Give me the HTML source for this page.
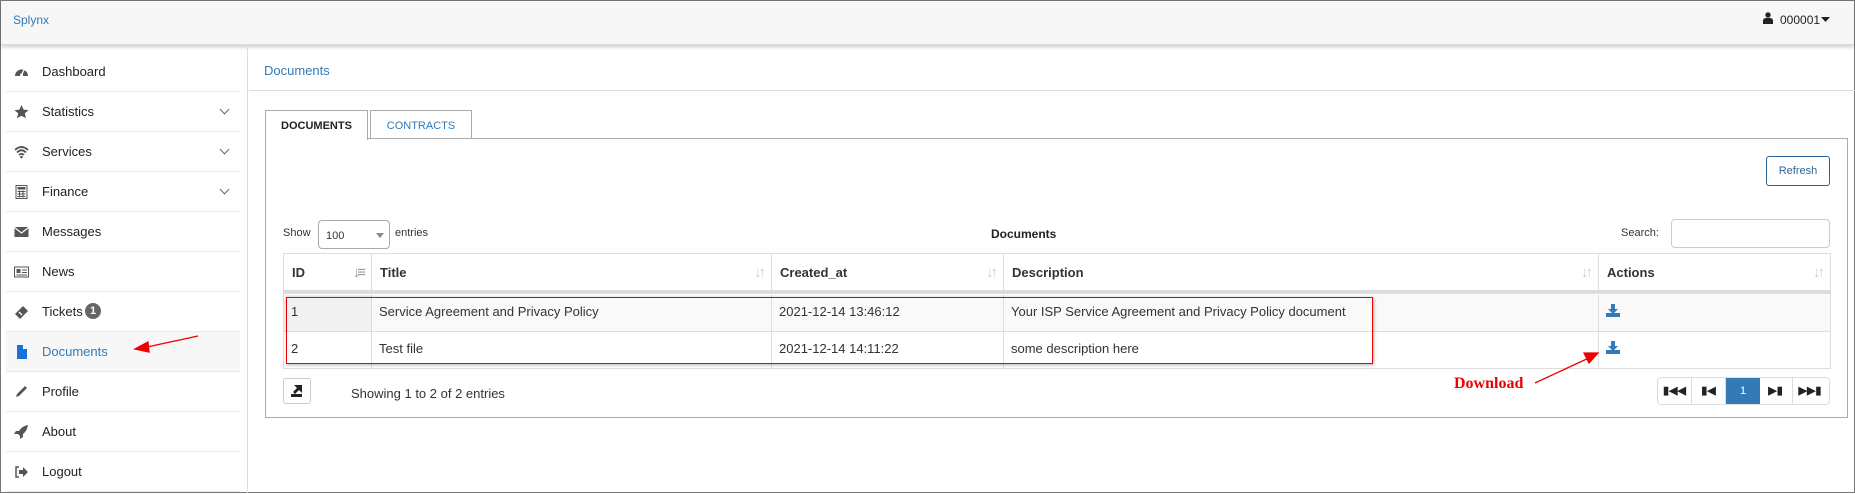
<!DOCTYPE html>
<html><head><meta charset="utf-8"><style>
*{box-sizing:border-box;margin:0;padding:0}
body{width:1855px;height:493px;font-family:"Liberation Sans",sans-serif;font-size:13px;color:#333;background:#fff;position:relative;overflow:hidden;border:1px solid #777}
.abs{position:absolute}
.top{left:0;top:0;width:1853px;height:44px;background:#f7f7f7;box-shadow:0 2px 4px rgba(0,0,0,.2);border-bottom:1px solid #ddd}
.side{left:0;top:44px;width:247px;height:449px;border-right:1px solid #ddd}
.mi{position:absolute;left:5px;width:234px;height:40px;border-bottom:1px solid #e8e8e8;font-size:13px;color:#222}
.mi span.t{position:absolute;left:36px;top:12px}
.mi .ic{position:absolute;left:8px;top:13px;width:15px;height:14px}
.chev{position:absolute;left:215px;top:14px;width:7px;height:7px;border-right:1.3px solid #666;border-bottom:1.3px solid #666;transform:rotate(45deg)}
.bc{left:263px;top:62px;color:#337ab7;font-size:13px}
.th{position:absolute;top:0;height:39px;border-right:1px solid #ddd;font-weight:bold;padding:11px 8px}
.td{position:absolute;padding:9px 7px;border-right:1px solid #ddd;height:100%}
.sort{position:absolute;right:8px;top:10px;color:#ccc;font-size:15px;font-weight:bold;letter-spacing:-3px}
.pg{position:absolute;top:0;width:34px;height:27px;border-right:1px solid #ddd;text-align:center;line-height:27px;font-size:11px;color:#222;font-weight:bold}
</style></head><body>
<div class="abs top"><span class="abs" style="left:12px;top:12px;color:#337ab7;font-size:12px">Splynx</span>
<svg class="abs" style="left:1762px;top:11px" width="10" height="12" viewBox="0 0 10 12"><circle cx="5" cy="3" r="2.7" fill="#222"/><path d="M0 12 L0 9 Q0 6 3 6 L7 6 Q10 6 10 9 L10 12Z" fill="#222"/></svg>
<span class="abs" style="left:1779px;top:12px;font-size:12px;color:#222">000001</span>
<svg class="abs" style="left:1820px;top:16px" width="9" height="6"><path d="M0 0H9L4.5 5Z" fill="#222"/></svg>
</div>
<div class="abs side">
<div class="mi" style="top:7px"><svg class="ic" viewBox="0 0 15 14"><path d="M1 11A6.5 6.5 0 1 1 14 11Z" fill="#555"/><circle cx="7.5" cy="10" r="1.5" fill="#fff"/><path d="M7.5 10L10 5" stroke="#fff" stroke-width="1.3"/></svg><span class="t">Dashboard</span></div>
<div class="mi" style="top:47px"><svg class="ic" viewBox="0 0 15 14"><path d="M7.5 0L9.6 4.6 14.5 5.1 10.8 8.4 11.9 13.3 7.5 10.8 3.1 13.3 4.2 8.4 0.5 5.1 5.4 4.6Z" fill="#555"/></svg><span class="t">Statistics</span><i class="chev"></i></div>
<div class="mi" style="top:87px"><svg class="ic" viewBox="0 0 15 14"><path d="M1 5Q7.5-1 14 5M3 7.5Q7.5 3 12 7.5M5 10Q7.5 7.5 10 10" stroke="#555" stroke-width="1.8" fill="none"/><circle cx="7.5" cy="12" r="1.3" fill="#555"/></svg><span class="t">Services</span><i class="chev"></i></div>
<div class="mi" style="top:127px"><svg class="ic" viewBox="0 0 15 14"><rect x="2" y="0.5" width="11" height="13" fill="none" stroke="#555"/><rect x="3.5" y="2" width="8" height="2.5" fill="#555"/><path d="M3.5 6.5h8M3.5 9h8M3.5 11.5h8M5.5 5.5v7M9 5.5v7" stroke="#555" stroke-width="1"/></svg><span class="t">Finance</span><i class="chev"></i></div>
<div class="mi" style="top:167px"><svg class="ic" viewBox="0 0 15 14"><rect x="0.5" y="2" width="14" height="10" fill="#555"/><path d="M0.5 2.5L7.5 8 14.5 2.5" stroke="#fff" stroke-width="1.2" fill="none"/></svg><span class="t">Messages</span></div>
<div class="mi" style="top:207px"><svg class="ic" viewBox="0 0 15 14"><rect x="0.5" y="2" width="14" height="10" fill="none" stroke="#555"/><rect x="2.5" y="4" width="4" height="4" fill="#555"/><path d="M8 5h5M8 7.5h5M2.5 10h10.5" stroke="#555"/></svg><span class="t">News</span></div>
<div class="mi" style="top:247px"><svg class="ic" viewBox="0 0 15 14"><path d="M1 9L9 1 14 6 6 14Z" fill="#555"/><path d="M5 7L8 10" stroke="#fff" stroke-width="1.3"/></svg><span class="t">Tickets</span><span class="abs" style="left:79px;top:11px;width:16px;height:16px;border-radius:8px;background:#666;color:#fff;font-size:11px;font-weight:bold;text-align:center;line-height:16px">1</span></div>
<div class="mi" style="top:287px;background:#f7f7f7"><svg class="ic" viewBox="0 0 15 14"><path d="M3 0H9L13 4V14H3Z" fill="#1a73d9"/><path d="M9 0V4H13" fill="#fff"/></svg><span class="t" style="color:#337ab7">Documents</span></div>
<div class="mi" style="top:327px"><svg class="ic" viewBox="0 0 15 14"><path d="M2 12L3 9 11 1 13 3 5 11Z" fill="#555"/></svg><span class="t">Profile</span></div>
<div class="mi" style="top:367px"><svg class="ic" viewBox="0 0 15 14"><path d="M14 0Q8 1 5 6L2 6 0 9 4 9 6 11 6 14 9 12 9 9Q13 6 14 0Z" fill="#555"/></svg><span class="t">About</span></div>
<div class="mi" style="top:407px"><svg class="ic" viewBox="0 0 15 14"><path d="M5 2H2V12H5" stroke="#555" stroke-width="1.5" fill="none"/><path d="M5 5H9V2L14 7 9 12V9H5Z" fill="#555"/></svg><span class="t">Logout</span></div>
</div>
<div class="abs bc">Documents</div>
<div class="abs" style="left:248px;top:89px;width:1606px;height:1px;background:#ddd"></div>
<div class="abs" style="left:264px;top:137px;width:1583px;height:280px;border:1px solid #aaa"></div>
<div class="abs" style="left:264px;top:109px;width:103px;height:30px;border:1px solid #aaa;border-bottom:none;background:#fff;font-size:11px;font-weight:bold;text-align:center;padding-top:9px;color:#222">DOCUMENTS</div>
<div class="abs" style="left:369px;top:109px;width:102px;height:28px;border:1px solid #aaa;border-bottom:none;font-size:11px;color:#337ab7;text-align:center;padding-top:9px">CONTRACTS</div>
<div class="abs" style="left:1765px;top:155px;width:64px;height:30px;border:1px solid #2a6496;border-radius:3px;color:#2a6496;font-size:11px;text-align:center;line-height:28px">Refresh</div>
<span class="abs" style="left:282px;top:226px;font-size:11px">Show</span>
<div class="abs" style="left:317px;top:219px;width:72px;height:29px;border:1px solid #aaa;border-radius:4px;font-size:11px;padding:9px 7px">100</div>
<svg class="abs" style="left:375px;top:232px" width="8" height="5"><path d="M0 0H8L4 5Z" fill="#888"/></svg>
<span class="abs" style="left:394px;top:226px;font-size:11px">entries</span>
<span class="abs" style="left:990px;top:226px;font-size:12px;font-weight:bold;color:#222">Documents</span>
<span class="abs" style="left:1620px;top:226px;font-size:11px">Search:</span>
<div class="abs" style="left:1670px;top:218px;width:159px;height:29px;border:1px solid #ccc;border-radius:4px"></div>
<div class="abs" style="left:282px;top:252px;width:1548px;height:116px;border:1px solid #ddd">
<div class="abs" style="left:0;top:0;width:1546px;height:40px;border-bottom:4px solid #ddd">
<div class="th" style="left:0;width:88px">ID<span class="sort" style="color:#999">↓≡</span></div>
<div class="th" style="left:88px;width:400px">Title<span class="sort">↓↑</span></div>
<div class="th" style="left:488px;width:232px">Created_at<span class="sort">↓↑</span></div>
<div class="th" style="left:720px;width:595px">Description<span class="sort">↓↑</span></div>
<div class="th" style="left:1315px;width:231px;border:none">Actions<span class="sort">↓↑</span></div>
</div>
<div class="abs" style="left:0;top:41px;width:1546px;height:37px;background:#f9f9f9;border-bottom:1px solid #ddd">
<div class="td" style="left:0;width:88px;background:#f1f1f1">1</div><div class="td" style="left:88px;width:400px">Service Agreement and Privacy Policy</div><div class="td" style="left:488px;width:232px">2021-12-14 13:46:12</div><div class="td" style="left:720px;width:595px">Your ISP Service Agreement and Privacy Policy document</div>
</div>
<div class="abs" style="left:0;top:78px;width:1546px;height:36px">
<div class="td" style="left:0;width:88px">2</div><div class="td" style="left:88px;width:400px">Test file</div><div class="td" style="left:488px;width:232px">2021-12-14 14:11:22</div><div class="td" style="left:720px;width:595px">some description here</div>
</div>
</div>
<svg class="abs" style="left:1605px;top:303px" width="14" height="13" viewBox="0 0 14 13"><path d="M5 0H9V5H12L7 10 2 5H5Z" fill="#337ab7"/><rect x="0" y="9" width="14" height="4" fill="#337ab7"/></svg>
<svg class="abs" style="left:1605px;top:340px" width="14" height="13" viewBox="0 0 14 13"><path d="M5 0H9V5H12L7 10 2 5H5Z" fill="#337ab7"/><rect x="0" y="9" width="14" height="4" fill="#337ab7"/></svg>
<div class="abs" style="left:285px;top:296px;width:1087px;height:67px;border:1.5px solid #e00;box-shadow:1px 1px 3px rgba(0,0,0,.3)"></div>
<div class="abs" style="left:282px;top:377px;width:28px;height:26px;border:1px solid #ccc;border-radius:3px"></div>
<svg class="abs" style="left:289px;top:383px" width="13" height="13" viewBox="0 0 13 13"><path d="M4 1H12V9L9 6 5 10 3 8 7 4Z" fill="#222"/><rect x="1" y="10" width="11" height="3" fill="#222"/></svg>
<span class="abs" style="left:350px;top:385px">Showing 1 to 2 of 2 entries</span>
<div class="abs" style="left:1656px;top:376px;width:173px;height:28px;border:1px solid #ddd;border-radius:4px;overflow:hidden">
<div class="pg" style="left:0">▮◀◀</div><div class="pg" style="left:34px">▮◀</div><div class="pg" style="left:68px;background:#337ab7;color:#fff;border:none;font-weight:normal">1</div><div class="pg" style="left:101px">▶▮</div><div class="pg" style="left:135px;border:none">▶▶▮</div>
</div>
<span class="abs" style="left:1453px;top:374px;font-family:'Liberation Serif',serif;font-weight:bold;font-size:16px;color:#e00">Download</span>
<svg class="abs" style="left:0;top:0" width="1855" height="493"><g stroke="#e00" stroke-width="1.3" fill="#e00"><line x1="1534" y1="382" x2="1590" y2="356"/><path d="M1597 352L1583 352 1588 362Z"/><line x1="197" y1="335" x2="146" y2="346"/><path d="M134 348L147 341 148 351Z"/></g></svg>
</body></html>
